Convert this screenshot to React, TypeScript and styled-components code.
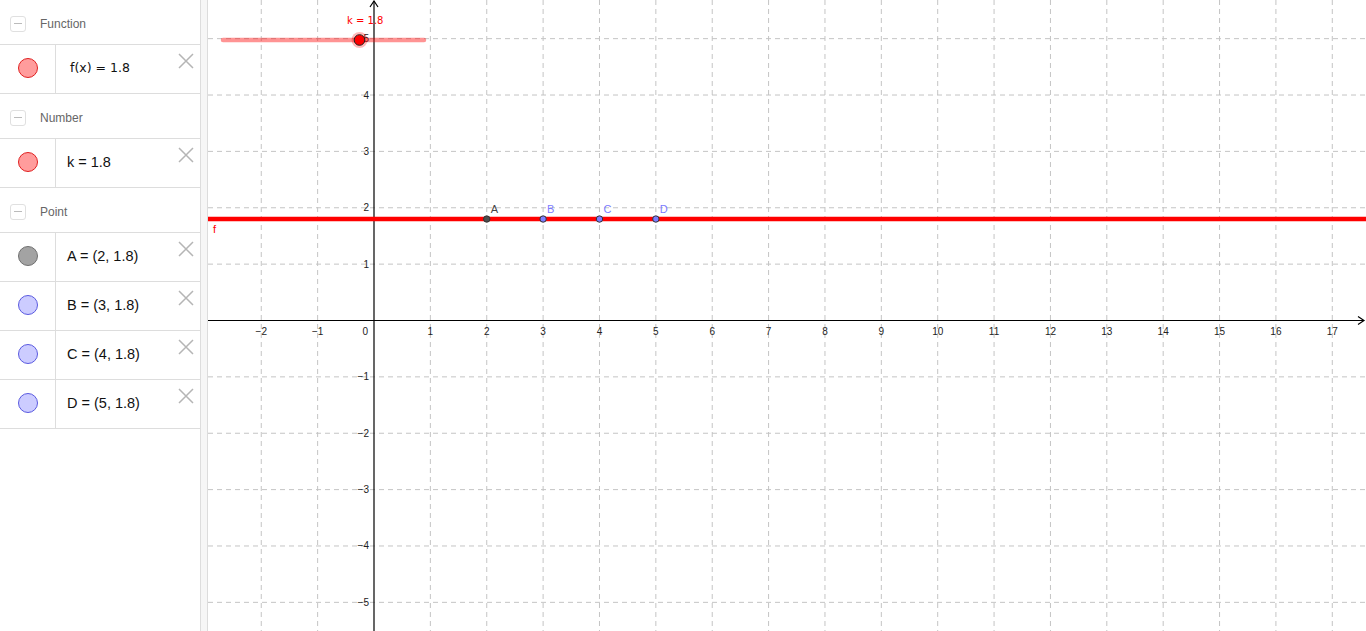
import React from "react";
import styled, { createGlobalStyle } from "styled-components";

const Global = createGlobalStyle`
  html, body { margin: 0; padding: 0; background: #fff; }
  body { font-family: "Liberation Sans", Arial, sans-serif; overflow: hidden; }
`;

const Page = styled.div`
  display: flex;
  width: 1366px;
  height: 631px;
  overflow: hidden;
`;

const Panel = styled.div`
  width: 200px;
  flex: 0 0 200px;
  border-right: 1px solid #dddddd;
  background: #fff;
  display: flex;
  flex-direction: column;
`;

const Splitter = styled.div`
  width: 6px;
  flex: 0 0 6px;
  background: #f6f6f6;
  border-right: 1px solid #dcdcdc;
`;

const Graph = styled.div`
  flex: 1;
  position: relative;
  overflow: hidden;
  background: #fff;
`;

const GroupHeader = styled.div`
  height: 45px;
  box-sizing: border-box;
  padding-top: 3px;
  border-bottom: 1px solid #dddddd;
  display: flex;
  align-items: center;
  padding-left: 10px;
  gap: 14px;
  font-size: 12px;
  color: #666;
`;

const Collapse = styled.span`
  width: 14px;
  height: 14px;
  border: 1px solid #e0e0e0;
  border-radius: 3px;
  display: flex;
  align-items: center;
  justify-content: center;
  &::after {
    content: "";
    width: 8px;
    height: 1.5px;
    background: #bbb;
  }
`;

const Item = styled.div`
  height: 48px;
  border-bottom: 1px solid #dddddd;
  display: flex;
  position: relative;
`;

const Marble = styled.div`
  width: 56px;
  flex: 0 0 56px;
  border-right: 1px solid #dddddd;
  display: flex;
  align-items: center;
  justify-content: center;
  padding-bottom: 3px;
  box-sizing: border-box;
`;

const Dot = styled.span<{ $fill: string; $stroke: string }>`
  width: 18px;
  height: 18px;
  border-radius: 50%;
  background: ${(p) => p.$fill};
  border: 1px solid ${(p) => p.$stroke};
`;

const Formula = styled.div<{ $small?: boolean }>`
  display: flex;
  align-items: center;
  padding-left: ${(p) => (p.$small ? "14px" : "11px")};
  padding-bottom: 3px;
  font-family: ${(p) => (p.$small ? '"DejaVu Sans", sans-serif' : '"Liberation Sans", Arial, sans-serif')};
  font-size: ${(p) => (p.$small ? "12.5px" : "14.5px")};
  color: #111;
  white-space: pre;
`;

const Close = styled.svg`
  position: absolute;
  right: 6px;
  top: 8px;
  width: 16px;
  height: 16px;
`;

type Row = { text: string; fill: string; stroke: string; small?: boolean };
const groups: { title: string; rows: Row[] }[] = [
  { title: "Function", rows: [{ text: "f(x) = 1.8", fill: "#ff9c9c", stroke: "#e02020", small: true }] },
  { title: "Number", rows: [{ text: "k = 1.8", fill: "#ff9c9c", stroke: "#e02020" }] },
  {
    title: "Point",
    rows: [
      { text: "A = (2, 1.8)", fill: "#a3a3a3", stroke: "#707070" },
      { text: "B = (3, 1.8)", fill: "#ccccff", stroke: "#5a5ae0" },
      { text: "C = (4, 1.8)", fill: "#ccccff", stroke: "#5a5ae0" },
      { text: "D = (5, 1.8)", fill: "#ccccff", stroke: "#5a5ae0" },
    ],
  },
];

const W = 1158;
const H = 631;
const U = 56.37;
const OX = 166;
const OY = 320.5;
const X = (u: number) => OX + U * u;
const Y = (v: number) => OY - U * v;
const minus = (n: number) => (n < 0 ? "\u2212" + Math.abs(n) : String(n));

function Plot() {
  const xs: number[] = [];
  for (let u = -2; u <= 17; u++) if (u !== 0) xs.push(u);
  const ys: number[] = [];
  for (let v = -5; v <= 5; v++) if (v !== 0) ys.push(v);
  const pts = [
    { n: "A", u: 2, fill: "#4d4d4d", lab: "#444" },
    { n: "B", u: 3, fill: "#7d7dff", lab: "#7b7bff" },
    { n: "C", u: 4, fill: "#7d7dff", lab: "#7b7bff" },
    { n: "D", u: 5, fill: "#7d7dff", lab: "#7b7bff" },
  ];
  const yf = Y(1.8);
  return (
    <svg width={W} height={H} viewBox={`0 0 ${W} ${H}`} style={{ display: "block" }}>
      <g stroke="#c4c4c4" strokeWidth={1} strokeDasharray="5 4">
        {xs.map((u) => (
          <line key={"gx" + u} x1={X(u)} y1={0} x2={X(u)} y2={H} />
        ))}
        {ys.map((v) => (
          <line key={"gy" + v} x1={0} y1={Y(v)} x2={W} y2={Y(v)} />
        ))}
      </g>
      <g stroke="#000" strokeWidth={1.2} fill="none">
        <line x1={0} y1={OY} x2={W - 2} y2={OY} />
        <line x1={OX} y1={1} x2={OX} y2={H} />
        <polyline points={`${W - 8},${OY - 4} ${W - 2},${OY} ${W - 8},${OY + 4}`} />
        <polyline points={`${OX - 4},${7} ${OX},${1} ${OX + 4},${7}`} />
      </g>
      <g fontFamily='"Liberation Sans", Arial, sans-serif' fontSize={10} fill="#222">
        {xs.map((u) => (
          <text key={"lx" + u} x={X(u)} y={335} textAnchor="middle">
            {minus(u)}
          </text>
        ))}
        <text x={OX - 6} y={335} textAnchor="end">0</text>
        {ys.map((v) => (
          <text key={"ly" + v} x={OX - 5} y={Y(v) + 3.5} textAnchor="end">
            {minus(v)}
          </text>
        ))}
      </g>
      <line x1={0} y1={yf} x2={W} y2={yf} stroke="#ff0000" strokeWidth={4.5} />
      <text x={5} y={233} fill="#ff0000" fontSize={11} fontFamily='"Liberation Sans", Arial, sans-serif'>
        f
      </text>
      {pts.map((p) => (
        <g key={p.n}>
          <circle cx={X(p.u)} cy={yf} r={3.2} fill={p.fill} stroke="#333" strokeWidth={1} />
          <text
            x={X(p.u) + 4}
            y={yf - 6}
            fill={p.lab}
            fontSize={11}
            fontFamily='"Liberation Sans", Arial, sans-serif'
          >
            {p.n}
          </text>
        </g>
      ))}
      <line x1={15} y1={40} x2={216} y2={40} stroke="#ff0000" strokeOpacity={0.42} strokeWidth={4.5} strokeLinecap="round" />
      <circle cx={151.5} cy={40} r={8} fill="#ff0000" fillOpacity={0.28} />
      <circle cx={151.5} cy={40} r={5.3} fill="#ff0000" stroke="#222" strokeWidth={1} />
      <text x={139} y={24} fill="#ff0000" fontSize={10} fontFamily='"DejaVu Sans", sans-serif'>
        k = 1.8
      </text>
    </svg>
  );
}

export default function App() {
  return (
    <Page>
      <Global />
      <Panel>
        {groups.map((g) => (
          <React.Fragment key={g.title}>
            <GroupHeader>
              <Collapse />
              {g.title}
            </GroupHeader>
            {g.rows.map((r) => (
              <Item key={r.text}>
                <Marble>
                  <Dot $fill={r.fill} $stroke={r.stroke} />
                </Marble>
                <Formula $small={r.small}>{r.text}</Formula>
                <Close viewBox="0 0 16 16">
                  <path d="M1 1 L15 15 M15 1 L1 15" stroke="#b5b5b5" strokeWidth={1.5} fill="none" />
                </Close>
              </Item>
            ))}
          </React.Fragment>
        ))}
      </Panel>
      <Splitter />
      <Graph>
        <Plot />
      </Graph>
    </Page>
  );
}
